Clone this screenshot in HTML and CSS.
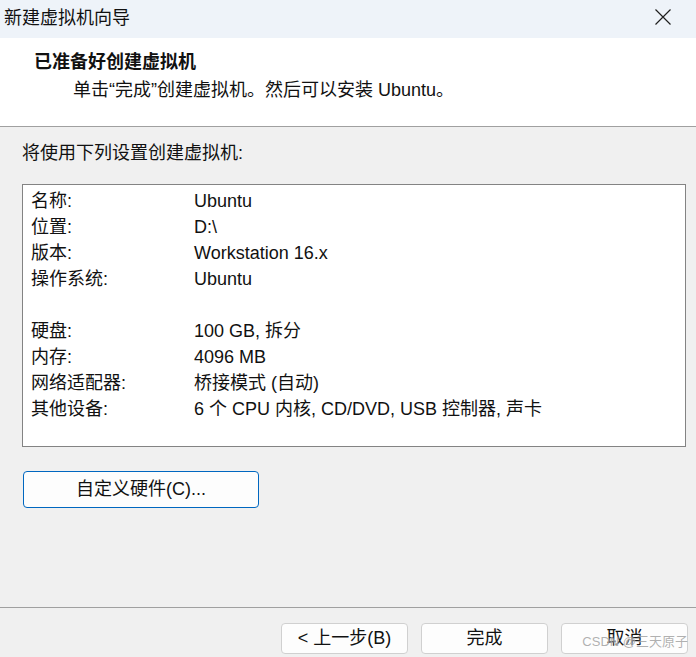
FILE: index.html
```html
<!DOCTYPE html>
<html lang="zh-CN">
<head>
<meta charset="utf-8">
<title>新建虚拟机向导</title>
<link rel="stylesheet" href="styles.css">
</head>
<body>
<div class="window">
  <div class="titlebar">
    <span class="title">新建虚拟机向导</span>
    <svg class="close" width="16" height="16" viewBox="0 0 16 16"><path d="M0.5 0.5 L15.5 15.5 M15.5 0.5 L0.5 15.5" stroke="#1f1f1f" stroke-width="1.2" fill="none"/></svg>
  </div>
  <div class="header">
    <div class="head-title">已准备好创建虚拟机</div>
    <div class="head-sub">单击“完成”创建虚拟机。然后可以安装 Ubuntu。</div>
  </div>
  <div class="main">
    <div class="intro">将使用下列设置创建虚拟机:</div>
    <div class="summary">
      <div class="row"><span class="label">名称:</span><span class="value">Ubuntu</span></div>
      <div class="row"><span class="label">位置:</span><span class="value">D:\</span></div>
      <div class="row"><span class="label">版本:</span><span class="value">Workstation 16.x</span></div>
      <div class="row"><span class="label">操作系统:</span><span class="value">Ubuntu</span></div>
      <div class="row"></div>
      <div class="row"><span class="label">硬盘:</span><span class="value">100 GB, 拆分</span></div>
      <div class="row"><span class="label">内存:</span><span class="value">4096 MB</span></div>
      <div class="row"><span class="label">网络适配器:</span><span class="value">桥接模式 (自动)</span></div>
      <div class="row"><span class="label">其他设备:</span><span class="value">6 个 CPU 内核, CD/DVD, USB 控制器, 声卡</span></div>
    </div>
    <button class="btn custom">自定义硬件(C)...</button>
  </div>
  <div class="footer">
    <button class="btn">&lt; 上一步(B)</button>
    <button class="btn">完成</button>
    <button class="btn">取消</button>
  </div>
  <div class="watermark">CSDN @三天原子</div>
</div>
</body>
</html>
```
FILE: styles.css
```css
html, body {
  margin: 0;
  padding: 0;
}
body {
  background: #f0f0f0;
  font-family: "Liberation Sans", "Noto Sans CJK SC", sans-serif;
  font-size: 18px;
  color: #111;
}
.window {
  position: relative;
  width: 696px;
  height: 657px;
  display: flex;
  flex-direction: column;
  overflow: hidden;
}
.titlebar {
  height: 38px;
  flex: none;
  background: #eef3f9;
  display: flex;
  align-items: center;
  justify-content: space-between;
  padding: 0 25px 0 4px;
}
.title {
  line-height: 24px;
  margin-top: -2px;
}
.close {
  margin-top: -4px;
}
.header {
  flex: none;
  height: 89px;
  box-sizing: border-box;
  background: #fff;
  border-bottom: 1px solid #a0a0a0;
  padding: 12px 0 0 34px;
}
.head-title {
  font-weight: bold;
  line-height: 24px;
}
.head-sub {
  line-height: 24px;
  margin-top: 4px;
  padding-left: 39px;
}
.main {
  flex: 1;
  padding: 14px 0 0 22px;
}
.intro {
  line-height: 24px;
}
.summary {
  margin-top: 19px;
  width: 664px;
  height: 263px;
  box-sizing: border-box;
  background: #fff;
  border: 1px solid #838383;
  padding: 3px 0 0 8px;
}
.row {
  height: 26px;
  line-height: 26px;
  display: flex;
}
.label {
  width: 163px;
  flex: none;
}
.btn {
  font-family: inherit;
  font-size: 18px;
  color: #111;
  background: #fdfdfd;
  border: 1px solid #d0d0d0;
  border-radius: 4px;
  width: 127px;
  height: 31px;
  padding: 0;
  line-height: 29px;
}
.custom {
  display: block;
  margin: 24px 0 0 1px;
  width: 236px;
  height: 37px;
  border-color: #0067c0;
  line-height: 35px;
}
.footer {
  flex: none;
  height: 50px;
  box-sizing: border-box;
  border-top: 1px solid #a0a0a0;
  display: flex;
  justify-content: flex-end;
  align-items: flex-start;
  gap: 13px;
  padding: 15px 8px 0 0;
}
.watermark {
  position: absolute;
  right: 8px;
  bottom: 7px;
  font-size: 13px;
  color: rgba(150, 150, 150, 0.75);
  text-shadow: 0 0 2px #fff;
}
```
